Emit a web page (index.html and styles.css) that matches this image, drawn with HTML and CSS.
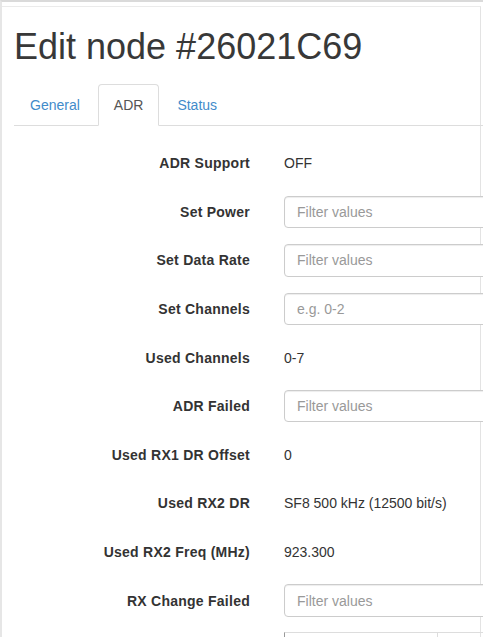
FILE: index.html
```html
<!DOCTYPE html>
<html lang="en">
<head>
<meta charset="utf-8">
<title>Edit node #26021C69</title>
<link rel="stylesheet" href="styles.css">
</head>
<body>
<div class="frame">
  <div class="panel">
    <h1 class="title">Edit node #26021C69</h1>
    <ul class="tabs">
      <li class="tab"><a class="tab-link" href="#">General</a></li>
      <li class="tab"><a class="tab-link active" href="#">ADR</a></li>
      <li class="tab"><a class="tab-link" href="#">Status</a></li>
    </ul>
    <form class="form">
      <div class="row"><label class="lbl">ADR Support</label><div class="val"><span class="static">OFF</span></div></div>
      <div class="row"><label class="lbl">Set Power</label><div class="val"><input class="input" type="text" placeholder="Filter values"></div></div>
      <div class="row"><label class="lbl">Set Data Rate</label><div class="val"><input class="input" type="text" placeholder="Filter values"></div></div>
      <div class="row"><label class="lbl">Set Channels</label><div class="val"><input class="input" type="text" placeholder="e.g. 0-2"></div></div>
      <div class="row"><label class="lbl">Used Channels</label><div class="val"><span class="static">0-7</span></div></div>
      <div class="row"><label class="lbl">ADR Failed</label><div class="val"><input class="input" type="text" placeholder="Filter values"></div></div>
      <div class="row"><label class="lbl">Used RX1 DR Offset</label><div class="val"><span class="static">0</span></div></div>
      <div class="row"><label class="lbl">Used RX2 DR</label><div class="val"><span class="static">SF8 500 kHz (12500 bit/s)</span></div></div>
      <div class="row"><label class="lbl">Used RX2 Freq (MHz)</label><div class="val"><span class="static">923.300</span></div></div>
      <div class="row"><label class="lbl">RX Change Failed</label><div class="val"><input class="input" type="text" placeholder="Filter values"></div></div>
      <div class="row row-table"><span class="lbl"></span><div class="val"><div class="tbl"><div class="tbl-cell"></div><div class="tbl-cell"></div></div></div></div>
    </form>
  </div>
</div>
</body>
</html>
```

FILE: styles.css
```css
html, body {
  margin: 0;
  padding: 0;
  overflow: hidden;
  background: #fff;
}

body {
  font-family: "Liberation Sans", Arial, sans-serif;
  font-size: 14px;
  line-height: 20px;
  color: #333;
}

.frame {
  box-sizing: border-box;
  width: 483px;
  height: 637px;
  overflow: hidden;
  border-top: 2px solid #dadada;
  border-left: 2px solid #e6e6e6;
  padding-top: 4px;
}

.panel {
  border-top: 1px solid #ebebeb;
  border-right: 1px solid #e3e3e3;
  width: 466px;
  padding-left: 12px;
  min-height: 700px;
}

.title {
  margin: 19.5px 0 0 0;
  font-size: 36px;
  line-height: 40px;
  font-weight: 500;
  color: #383838;
}

.tabs {
  list-style: none;
  margin: 17.5px 0 0 0;
  padding: 0;
  display: flex;
  border-bottom: 1px solid #ddd;
  width: 480px;
}

.tab {
  margin-bottom: -1px;
}

.tab-link {
  display: block;
  padding: 10px 15px;
  margin-right: 2px;
  border: 1px solid transparent;
  border-radius: 4px 4px 0 0;
  color: #428bca;
  text-decoration: none;
}

.tab-link.active {
  color: #555;
  background: #fff;
  border-color: #ddd #ddd transparent;
}

.form {
  padding-top: 21px;
}

.row {
  display: flex;
  align-items: center;
  height: 32.5px;
  margin-bottom: 16.1px;
}

.lbl {
  flex: none;
  width: 236px;
  text-align: right;
  font-weight: bold;
  letter-spacing: 0.25px;
  color: #333;
}

.val {
  flex: none;
  width: 600px;
  margin-left: 34px;
}

.static {
  color: #333;
}

.input {
  display: block;
  box-sizing: border-box;
  width: 100%;
  height: 32.5px;
  padding: 6px 12px;
  border: 1px solid #ccc;
  border-radius: 4px;
  font-family: inherit;
  font-size: 14px;
  color: #555;
  background: #fff;
  box-shadow: inset 0 1px 1px rgba(0, 0, 0, 0.075);
}

.input::placeholder {
  color: #999;
}

.row-table {
  align-items: flex-start;
  height: 40px;
}

.tbl {
  display: flex;
  border-top: 1px solid #ddd;
  border-left: 1px solid #999;
  height: 40px;
  margin-top: -0.5px;
}

.tbl-cell {
  width: 152px;
  border-right: 1px solid #ddd;
}
```
